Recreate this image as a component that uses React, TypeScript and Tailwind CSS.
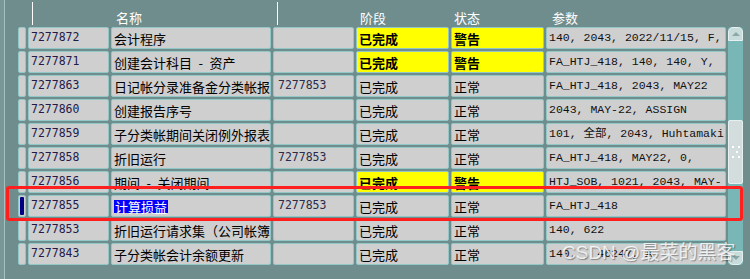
import React from 'react';

type Row = {
  id: string;
  name: string;
  parent: string;
  warn: boolean;
  params: string;
  selected?: boolean;
};

const rows: Row[] = [
  { id: '7277872', name: '会计程序', parent: '', warn: true, params: '140, 2043, 2022/11/15, F,' },
  { id: '7277871', name: '创建会计科目\u2002-\u2002资产', parent: '', warn: true, params: 'FA_HTJ_418, 140, 140, Y,' },
  { id: '7277863', name: '日记帐分录准备金分类帐报表', parent: '7277853', warn: false, params: 'FA_HTJ_418, 2043, MAY22' },
  { id: '7277860', name: '创建报告序号', parent: '', warn: false, params: '2043, MAY-22, ASSIGN' },
  { id: '7277859', name: '子分类帐期间关闭例外报表', parent: '', warn: false, params: '101, 全部, 2043, Huhtamaki' },
  { id: '7277858', name: '折旧运行', parent: '7277853', warn: false, params: 'FA_HTJ_418, MAY22, 0,' },
  { id: '7277856', name: '期间\u2002-\u2002关闭期间', parent: '', warn: true, params: 'HTJ_SOB, 1021, 2043, MAY-' },
  { id: '7277855', name: '计算损益', parent: '7277853', warn: false, params: 'FA_HTJ_418', selected: true },
  { id: '7277853', name: '折旧运行请求集（公司帐簿）', parent: '', warn: false, params: '140, 622' },
  { id: '7277843', name: '子分类帐会计余额更新', parent: '', warn: false, params: '140, , 46247, A' },
];

const cjk = "font-['Noto_Sans_CJK_SC',sans-serif]";
const cell = 'h-[22px] flex items-center overflow-hidden whitespace-nowrap rounded-[2px] border border-[#93c6c6] pl-[2px]';

export default function App() {
  return (
    <div className="relative w-[750px] h-[279px] overflow-hidden bg-[#6f8d8d] flex">
      {/* left edge */}
      <div className="w-[5px] h-full bg-[#7a9797] border-r border-[#a6c0c0] shrink-0" />

      <div className="flex flex-col pl-[13px]">
        {/* Header */}
        <div className="h-[27px] grid grid-cols-[8px_81px_160px_81px_93px_93px_180px] gap-x-[2px] text-white text-[13px] leading-none">
          <div />
          <div className="relative">
            <div className="absolute left-[4px] top-[2px] w-px h-[23px] bg-white" />
          </div>
          <div className={`${cjk} pl-[5px] pt-[11px]`}>名称</div>
          <div className="relative">
            <div className="absolute left-[4px] top-[2px] w-px h-[23px] bg-white" />
          </div>
          <div className={`${cjk} pl-[4px] pt-[11px]`}>阶段</div>
          <div className={`${cjk} pl-[3px] pt-[11px]`}>状态</div>
          <div className={`${cjk} pl-[6px] pt-[11px]`}>参数</div>
        </div>

        {/* Rows */}
        <div className="flex gap-x-[2px]">
          <div className="flex flex-col gap-y-[2px]">
            {rows.map((r) => (
              <div
                key={r.id}
                className="grid grid-cols-[8px_81px_160px_81px_93px_93px_180px] gap-x-[2px] text-[13px] leading-none"
              >
                <div className="h-[22px] rounded-[2px] border border-[#93c6c6] bg-[#cfcfcf] p-[1px]">
                  {r.selected && <div className="w-full h-full bg-[#000080] rounded-[1px]" />}
                </div>
                <div className={`${cell} bg-[#cfcfcf] font-['DejaVu_Sans_Mono',monospace] text-[11.5px] text-[#221a4a]`}>
                  {r.id}
                </div>
                <div className={`${cell} bg-[#cfcfcf] ${cjk} text-black`}>
                  {r.selected ? <span className="bg-[#0000ff] text-white px-[1px]">{r.name}</span> : r.name}
                </div>
                <div className={`${cell} bg-[#cfcfcf] font-['DejaVu_Sans_Mono',monospace] text-[11.5px] text-[#2a2a4a] pl-[4px]`}>
                  {r.parent}
                </div>
                <div className={`${cell} ${cjk} text-black ${r.warn ? 'bg-[#ffff00] font-bold' : 'bg-[#cfcfcf]'}`}>
                  已完成
                </div>
                <div className={`${cell} ${cjk} text-black ${r.warn ? 'bg-[#ffff00] font-bold' : 'bg-[#cfcfcf]'}`}>
                  {r.warn ? '警告' : '正常'}
                </div>
                <div className={`${cell} bg-[#cfcfcf] font-['Liberation_Mono','Noto_Sans_CJK_SC',monospace] text-[11.5px] text-[#111]`}>
                  {r.params}
                </div>
              </div>
            ))}
          </div>

          {/* Scrollbar */}
          <div className="w-[15px] h-[238px] bg-[#79b7b7] rounded-[3px] flex flex-col">
            <div className="h-[14px] shrink-0 rounded-t-[5px] border border-[#e6f0f0] bg-[#c9dcdc] flex items-center justify-center">
              <div className="w-0 h-0 border-l-[4px] border-r-[4px] border-b-[4px] border-l-transparent border-r-transparent border-b-[#8aa8a8]" />
            </div>
            <div className="h-[79px] shrink-0" />
            <div className="h-[64px] shrink-0 border border-[#e6f0f0] bg-[#d4dddd] rounded-[2px] flex flex-col items-center justify-center gap-[3px]">
              <div className="flex gap-[4px]"><div className="w-[2px] h-[2px] bg-white" /><div className="w-[2px] h-[2px] bg-white" /></div>
              <div className="flex gap-[4px] pl-[3px]"><div className="w-[2px] h-[2px] bg-white" /></div>
              <div className="flex gap-[4px]"><div className="w-[2px] h-[2px] bg-white" /><div className="w-[2px] h-[2px] bg-white" /></div>
            </div>
            <div className="flex-1" />
            <div className="h-[14px] shrink-0 rounded-b-[5px] border border-[#e6f0f0] bg-[#c9dcdc] flex items-center justify-center">
              <div className="w-0 h-0 border-l-[4px] border-r-[4px] border-t-[4px] border-l-transparent border-r-transparent border-t-[#8aa8a8]" />
            </div>
          </div>
        </div>
      </div>

      {/* Red highlight box */}
      <div className="absolute left-[6px] top-[186px] w-[737px] h-[35px] border-[3px] border-[#ff1f1f] rounded-[3px]" />

      {/* Watermark */}
      <div className="absolute left-[562px] top-[243px] text-[19px] leading-none text-white/80 font-['Liberation_Sans','Noto_Sans_CJK_SC',sans-serif] [text-shadow:1px_1px_1px_rgba(0,0,0,0.35)] whitespace-nowrap">
        CSDN @最菜的黑客
      </div>
    </div>
  );
}
